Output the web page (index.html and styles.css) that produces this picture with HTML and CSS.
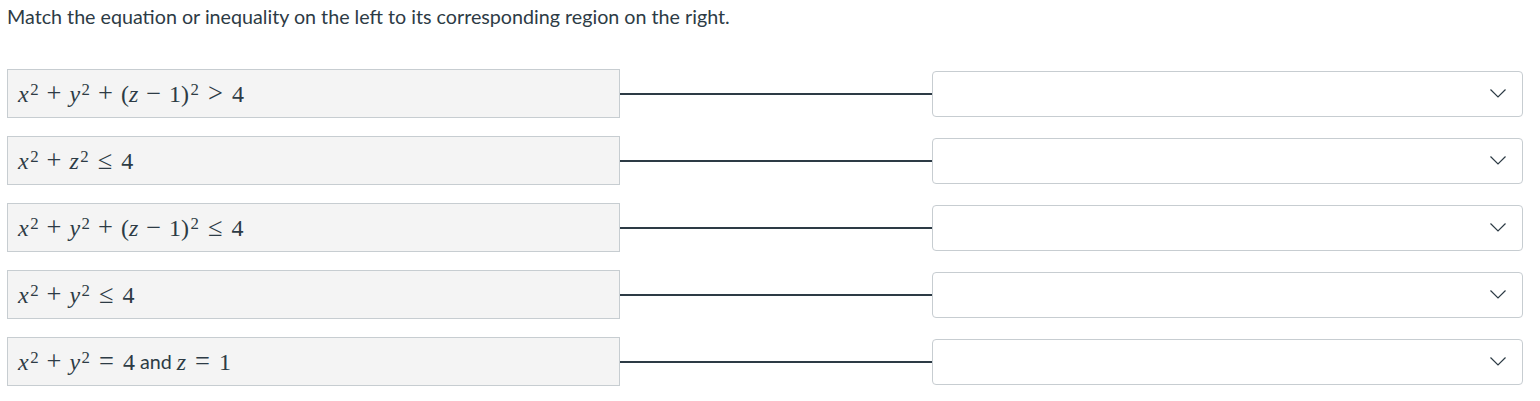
FILE: index.html
```html
<!DOCTYPE html>
<html lang="en">
<head>
<meta charset="utf-8">
<title>Matching question</title>
<link rel="stylesheet" href="styles.css">
</head>
<body>
<div class="question">
  <p class="prompt">Match the equation or inequality on the left to its corresponding region on the right.</p>
  <div class="rows">
    <div class="row">
      <div class="stem"><span class="math"><i>x</i><sup>2</sup><span class="bin">+</span><i>y</i><sup>2</sup><span class="bin">+</span>(<i>z</i><span class="bin">−</span>1)<sup>2</sup><span class="rel">&gt;</span>4</span></div>
      <div class="connector"></div>
      <div class="select"><svg class="chev" viewBox="0 0 16 9" width="16" height="9"><path d="M0.5 0.5 L8 8 L15.5 0.5" fill="none" stroke="#2d3b45" stroke-width="1.2"/></svg></div>
    </div>
    <div class="row">
      <div class="stem"><span class="math"><i>x</i><sup>2</sup><span class="bin">+</span><i>z</i><sup>2</sup><span class="rel">≤</span>4</span></div>
      <div class="connector"></div>
      <div class="select"><svg class="chev" viewBox="0 0 16 9" width="16" height="9"><path d="M0.5 0.5 L8 8 L15.5 0.5" fill="none" stroke="#2d3b45" stroke-width="1.2"/></svg></div>
    </div>
    <div class="row">
      <div class="stem"><span class="math"><i>x</i><sup>2</sup><span class="bin">+</span><i>y</i><sup>2</sup><span class="bin">+</span>(<i>z</i><span class="bin">−</span>1)<sup>2</sup><span class="rel">≤</span>4</span></div>
      <div class="connector"></div>
      <div class="select"><svg class="chev" viewBox="0 0 16 9" width="16" height="9"><path d="M0.5 0.5 L8 8 L15.5 0.5" fill="none" stroke="#2d3b45" stroke-width="1.2"/></svg></div>
    </div>
    <div class="row">
      <div class="stem"><span class="math"><i>x</i><sup>2</sup><span class="bin">+</span><i>y</i><sup>2</sup><span class="rel">≤</span>4</span></div>
      <div class="connector"></div>
      <div class="select"><svg class="chev" viewBox="0 0 16 9" width="16" height="9"><path d="M0.5 0.5 L8 8 L15.5 0.5" fill="none" stroke="#2d3b45" stroke-width="1.2"/></svg></div>
    </div>
    <div class="row">
      <div class="stem"><span class="math"><i>x</i><sup>2</sup><span class="bin">+</span><i>y</i><sup>2</sup><span class="rel">=</span>4</span><span class="word"> and </span><span class="math"><i>z</i><span class="rel">=</span>1</span></div>
      <div class="connector"></div>
      <div class="select"><svg class="chev" viewBox="0 0 16 9" width="16" height="9"><path d="M0.5 0.5 L8 8 L15.5 0.5" fill="none" stroke="#2d3b45" stroke-width="1.2"/></svg></div>
    </div>
  </div>
</div>
</body>
</html>
```
FILE: styles.css
```css
html, body {
  margin: 0;
  padding: 0;
  background: #ffffff;
}

body {
  font-family: Lato, "Liberation Sans", sans-serif;
  color: #2d3b45;
}

.question {
  padding: 5px 0 0 7px;
}

.prompt {
  margin: 0;
  font-size: 19.7px;
  line-height: 24px;
}

.rows {
  margin-top: 40px;
  display: flex;
  flex-direction: column;
  gap: 18px;
}

.row {
  display: grid;
  grid-template-columns: 613px 312px 591px;
  align-items: center;
  height: 49px;
}

.stem {
  box-sizing: border-box;
  height: 49px;
  background: #f4f4f4;
  border: 1px solid #c7cdd1;
  display: flex;
  align-items: center;
  padding: 0 10px;
  white-space: nowrap;
}

.math {
  font-family: "Liberation Serif", "DejaVu Serif", serif;
  font-size: 24px;
  line-height: 26px;
  color: #2d3b45;
}

.math i {
  font-style: italic;
}

.math sup {
  font-size: 0.7em;
  line-height: 0;
  vertical-align: 0.42em;
  margin-left: 1.5px;
}

.bin,
.rel {
  font-size: 1.1em;
  line-height: 1;
}

.bin {
  margin: 0 8px;
}

.rel {
  margin: 0 9px;
}

.word {
  font-family: Lato, "Liberation Sans", sans-serif;
  font-size: 19.7px;
  white-space: pre;
}

.connector {
  height: 2px;
  background: #2d3b45;
}

.select {
  box-sizing: border-box;
  height: 46px;
  border: 1px solid #c7cdd1;
  border-radius: 4px;
  background: #ffffff;
  display: flex;
  align-items: center;
  justify-content: flex-end;
  padding-right: 16px;
}

.chev {
  display: block;
}
```
